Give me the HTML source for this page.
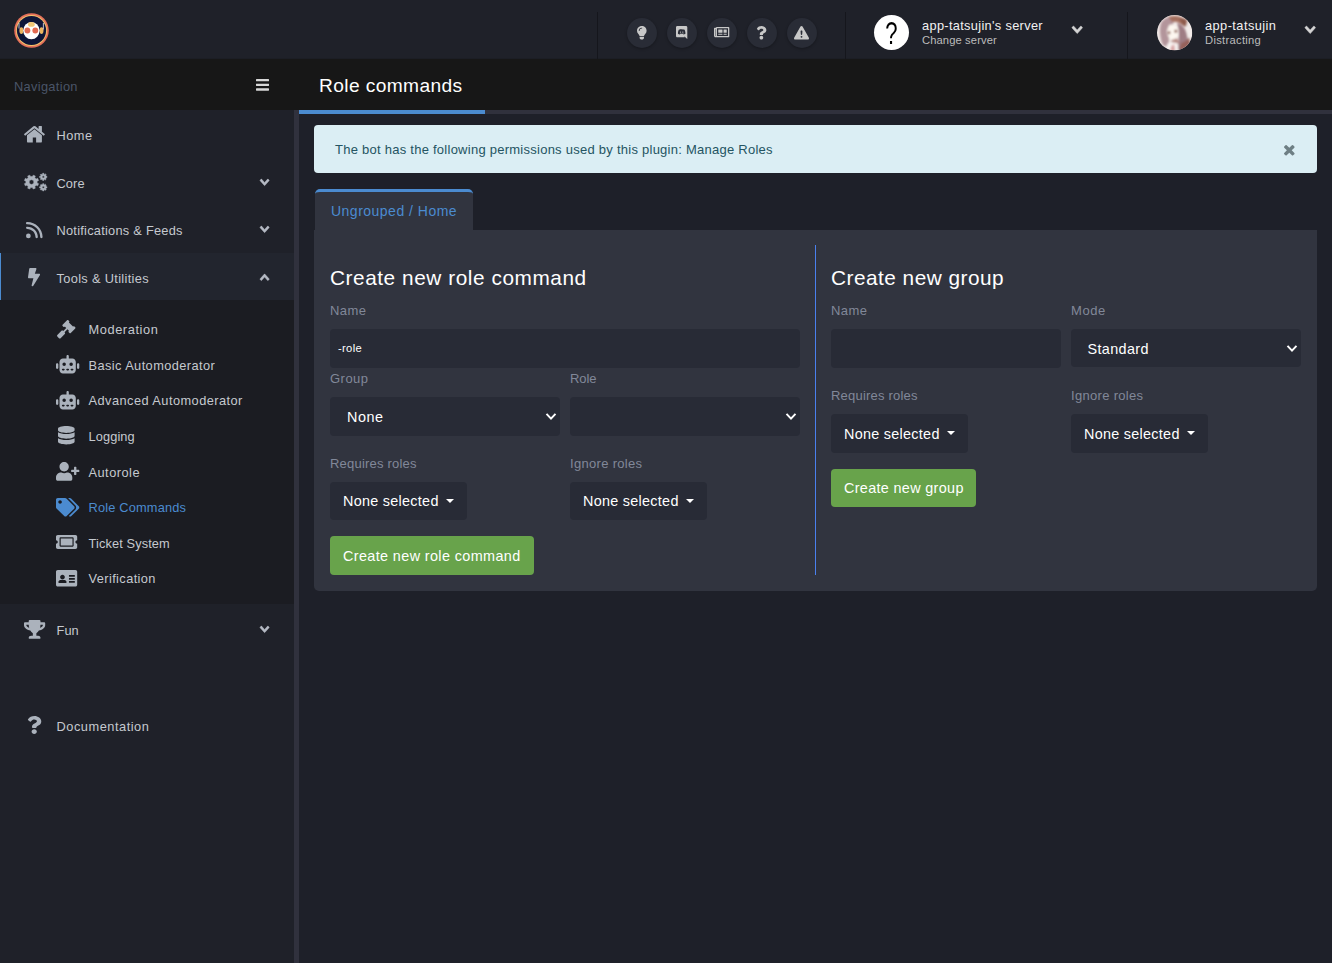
<!DOCTYPE html>
<html lang="en">
<head>
<meta charset="utf-8">
<title>Role commands</title>
<style>
html,body{margin:0;padding:0}
body{width:1332px;height:963px;overflow:hidden;background:#1e2029;position:relative;font-family:"Liberation Sans",sans-serif;color:#fff}
.a{position:absolute}
.t{position:absolute;white-space:nowrap;line-height:1;margin:0;padding:0;font-weight:400}
.ic{position:absolute;display:block;overflow:visible}
#hdr{left:0;top:0;width:1332px;height:58px;background:#1f2129;border-bottom:1px solid #1c1e25}
.sep{width:1px;top:12px;height:47px;background:#15161c}
.circ{width:30px;height:30px;top:17.500px;border-radius:50%;background:#292c36;box-shadow:0 1px 3px rgba(0,0,0,.3)}
#bar{left:0;top:59px;width:1332px;height:51px;background:#171717}
#side{left:0;top:110px;width:294px;height:853px;background:#1f2129}
#div{left:294px;top:110px;width:5px;height:853px;background:#30313d}
#strip{left:299px;top:110px;width:1033px;height:4px;background:#30313d}
#blue{left:299px;top:110px;width:186px;height:4px;background:#4b8bd0}
#act{left:0;top:253px;width:294px;height:47px;background:#22252e}
#actb{left:0;top:253px;width:1px;height:47px;background:#4b8bd0}
#sub{left:0;top:300px;width:294px;height:304px;background:#1b1c22}
.nav{color:#c5c9cf}
.lbl{color:#818899}
#alert{left:314px;top:125px;width:1003px;height:48px;background:#dbeef4;border-radius:4px}
#tab{left:315px;top:189px;width:158px;height:41px;background:#31343f;border-top:3px solid #4b8bd0;border-radius:5px 5px 0 0;box-sizing:border-box}
#card{left:314px;top:230px;width:1003px;height:361px;background:#31343f;border-radius:0 0 5px 5px}
#vline{left:815px;top:245px;width:1px;height:330px;background:#4a80ee}
.inp{background:#282b36;border-radius:4px}
.btn{background:#282b36;border-radius:4px}
.gbtn{background:#68a34b;border-radius:4px}
.caret{width:0;height:0;border-left:4px solid transparent;border-right:4px solid transparent;border-top:4.300px solid #fff}
</style>
</head>
<body>
<!-- top header -->
<div class="a" id="hdr"></div>
<svg class="ic" style="left:14px;top:13px;width:35px;height:35px" viewBox="0 0 35 35">
<circle cx="17.5" cy="17.5" r="17.300" fill="#e4705a"/>
<circle cx="17.5" cy="17.5" r="15.500" fill="#f3c46b"/>
<circle cx="17.5" cy="17.5" r="14.600" fill="#0e1638"/>
<ellipse cx="7.400" cy="17.600" rx="2" ry="3.400" fill="#e9b45f"/>
<ellipse cx="27.500" cy="17.600" rx="2" ry="3.400" fill="#e9b45f"/>
<rect x="4.600" y="10" width="0.800" height="5.500" fill="#e8e8ee"/>
<rect x="28.900" y="10" width="0.800" height="6.500" fill="#e8e8ee"/>
<ellipse cx="17.400" cy="17.600" rx="8.200" ry="8.700" fill="#ffffff"/>
<ellipse cx="17.400" cy="11.400" rx="3.400" ry="2.400" fill="#f1c777"/>
<circle cx="13.400" cy="17.500" r="2.900" fill="#e26a52"/>
<circle cx="21.300" cy="17.500" r="2.900" fill="#e26a52"/>
</svg>
<div class="a sep" style="left:597px"></div>
<div class="a circ" style="left:627px"></div>
<div class="a circ" style="left:667px"></div>
<div class="a circ" style="left:707px"></div>
<div class="a circ" style="left:747px"></div>
<div class="a circ" style="left:787px"></div>
<svg class="ic" style="left:636.7px;top:25.5px;width:9.6px;height:13.5px" viewBox="0 0 352 512" preserveAspectRatio="none" fill="#c8c8c8"><path d="M96.060 454.350c.010 6.290 1.870 12.450 5.360 17.690l17.090 25.690a31.990 31.990 0 0 0 26.640 14.280h61.710a31.990 31.990 0 0 0 26.640-14.280l17.090-25.690a31.989 31.989 0 0 0 5.360-17.690l.040-38.350H96.010l.050 38.350zM0 176c0 44.370 16.450 84.850 43.560 115.780 16.520 18.850 42.360 58.230 52.210 91.450.040.260.070.520.110.780h160.240c.040-.260.070-.510.110-.780 9.850-33.220 35.690-72.600 52.210-91.450C335.550 260.850 352 220.370 352 176 352 78.610 272.910-.300 175.450 0 73.440.310 0 82.970 0 176zm176-80c-44.110 0-80 35.890-80 80 0 8.840-7.160 16-16 16s-16-7.160-16-16c0-61.760 50.240-112 112-112 8.840 0 16 7.160 16 16s-7.160 16-16 16z"/></svg>
<svg class="ic" style="left:675.8px;top:25.5px;width:11.3px;height:12.9px" viewBox="0.0 0.0 448.0 512.0" preserveAspectRatio="none" fill="#c8c8c8"><path d="M297.216 243.2c0 15.616-11.52 28.416-26.112 28.416-14.336 0-26.112-12.8-26.112-28.416s11.52-28.416 26.112-28.416c14.592 0 26.112 12.8 26.112 28.416zm-119.552-28.416c-14.592 0-26.112 12.8-26.112 28.416s11.776 28.416 26.112 28.416c14.592 0 26.112-12.8 26.112-28.416.256-15.616-11.52-28.416-26.112-28.416zM448 52.736V512c-64.494-56.994-43.868-38.128-118.784-107.776l13.568 47.36H52.48C23.552 451.584 0 428.032 0 398.848V52.736C0 23.552 23.552 0 52.48 0h343.04C424.448 0 448 23.552 448 52.736zm-72.96 242.688c0-82.432-36.864-149.248-36.864-149.248-36.864-27.648-71.936-26.88-71.936-26.88l-3.584 4.096c43.52 13.312 63.744 32.512 63.744 32.512-60.811-33.329-132.244-33.335-191.232-7.424-9.472 4.352-15.104 7.424-15.104 7.424s21.248-20.224 67.328-33.536l-2.56-3.072s-35.072-.768-71.936 26.88c0 0-36.864 66.816-36.864 149.248 0 0 21.504 37.12 78.08 38.912 0 0 9.472-11.52 17.152-21.248-32.512-9.728-44.8-30.208-44.8-30.208 3.766 2.636 9.976 6.053 10.496 6.400 43.21 24.198 104.588 32.126 159.744 8.960 8.960-3.328 18.944-8.192 29.440-15.104 0 0-12.8 20.992-46.336 30.464 7.680 9.728 16.896 20.736 16.896 20.736 56.576-1.792 78.336-38.912 78.336-38.912z"/></svg>
<svg class="ic" style="left:713.9px;top:26.7px;width:15.3px;height:10.3px" viewBox="0 0 576 384" preserveAspectRatio="none" fill="#c8c8c8"><path fill-rule="evenodd" d="M552 0H112C92 0 74 13 68 32H24C11 32 0 43 0 56v272c0 31 25 56 56 56h496c13 0 24-11 24-24V24c0-13-11-24-24-24zM48 328V80h16v248c0 4-4 8-8 8s-8-4-8-8zm480 8H111c1-3 1-5 1-8V48h416v288zM172 216h136c7 0 12-5 12-12V108c0-7-5-12-12-12H172c-7 0-12 5-12 12v96c0 7 5 12 12 12zm200 0h96c7 0 12-5 12-12V108c0-7-5-12-12-12h-96c-7 0-12 5-12 12v96c0 7 5 12 12 12zM160 276v-8c0-7 5-12 12-12h136c7 0 12 5 12 12v8c0 7-5 12-12 12H172c-7 0-12-5-12-12zm200 0v-8c0-7 5-12 12-12h96c7 0 12 5 12 12v8c0 7-5 12-12 12h-96c-7 0-12-5-12-12z"/></svg>
<svg class="ic" style="left:757.1px;top:25.5px;width:9.4px;height:13.5px" viewBox="29 0 349 512" preserveAspectRatio="none" fill="#c8c8c8"><path d="M202.021 0C122.202 0 70.503 32.703 29.914 91.026c-7.363 10.580-5.093 25.086 5.178 32.874l43.138 32.709c10.373 7.865 25.132 6.026 33.253-4.148 25.049-31.381 43.630-49.449 82.757-49.449 30.764 0 68.816 19.799 68.816 49.631 0 22.552-18.617 34.134-48.993 51.164-35.423 19.860-82.299 44.576-82.299 106.405V320c0 13.255 10.745 24 24 24h72.471c13.255 0 24-10.745 24-24v-5.773c0-42.860 125.268-44.645 125.268-160.627C377.504 66.256 286.902 0 202.021 0zM192 373.459c-38.196 0-69.271 31.075-69.271 69.271 0 38.195 31.075 69.270 69.271 69.270s69.271-31.075 69.271-69.271-31.075-69.270-69.271-69.270z"/></svg>
<svg class="ic" style="left:794.1px;top:25.5px;width:15px;height:13.5px" viewBox="-0.0 0.0 512.0 480.0" preserveAspectRatio="none" fill="#c8c8c8"><path d="M256 0c14.7 0 28.2 8.1 35.2 21l216 400c6.7 12.4 6.4 27.4-.8 39.5S486.1 480 472 480H40c-14.1 0-27.2-7.4-34.4-19.5s-7.5-27.1-.8-39.5l216-400c7-12.9 20.5-21 35.2-21m0 352a32 32 0 1 0 0 64 32 32 0 1 0 0-64m0-192c-18.2 0-32.7 15.5-31.4 33.7l7.4 104c.9 12.5 11.4 22.3 23.9 22.3 12.6 0 23-9.7 23.9-22.3l7.4-104c1.3-18.2-13.1-33.7-31.4-33.7z"/></svg>
<div class="a sep" style="left:845px"></div>
<div class="a" style="left:874px;top:15px;width:35px;height:35px;border-radius:50%;background:#fff"></div>
<div class="t" style="left:874px;top:16.500px;width:35px;text-align:center;font-size:32px;color:#000;transform:scaleX(.69)">?</div>
<div class="t" style="left:922px;top:20px;font-size:12.8px;color:#f2f2f2;letter-spacing:0.324px">app-tatsujin's server</div>
<div class="t" style="left:922px;top:35px;font-size:11.2px;color:#bcbcbc;letter-spacing:0.115px">Change server</div>
<svg class="ic" style="left:1072px;top:26.1px;width:10.4px;height:7.5px" viewBox="90.0 -1003.0 1612.0 1035.0" preserveAspectRatio="none" fill="#d4d4d4" stroke="#d4d4d4" stroke-width="70" stroke-linejoin="round"><path transform="scale(1,-1)" d="M1683 728l-742 -741q-19 -19 -45 -19t-45 19l-742 741q-19 19 -19 45.5t19 45.5l166 165q19 19 45 19t45 -19l531 -531l531 531q19 19 45 19t45 -19l166 -165q19 -19 19 -45.5t-19 -45.5z"/></svg>
<div class="a sep" style="left:1127px"></div>
<svg class="ic" style="left:1157px;top:14.700px;width:35.300px;height:35.300px" viewBox="0 0 35 35">
<defs><clipPath id="avc"><circle cx="17.5" cy="17.5" r="17.5"/></clipPath><filter id="avb" x="-10%" y="-10%" width="120%" height="120%"><feGaussianBlur stdDeviation="0.800"/></filter></defs>
<g clip-path="url(#avc)">
<rect width="35" height="35" fill="#f1e9e7"/>
<g filter="url(#avb)">
<path d="M4 8C7 2 14 1 18 2l-2 7c-3 5-5 13-4 23l-6-2C3 24 2 14 4 8z" fill="#b3959b"/>
<path d="M11 2c6-2 15-1 19 5l-2 5c-4-4-9-6-13-5z" fill="#a5705f"/>
<path d="M22 3l7 1 1 7-5-1z" fill="#8e5a4b"/>
<path d="M20 8c5 1 9 6 10 14 1 6-1 10-4 13h-7c3-7 4-17 1-27z" fill="#9f7d84"/>
<path d="M12 10c4-2 8 1 9 6 0 5-3 9-6 9-3-1-5-5-5-10z" fill="#fdf7f0"/>
<ellipse cx="12" cy="17.500" rx="1.300" ry="1.600" fill="#8a5648"/>
<ellipse cx="18.700" cy="16" rx="1.400" ry="1.700" fill="#8a5648"/>
<path d="M14 25l6-2 2 5-7 1z" fill="#b78a84"/>
<path d="M10 29c3-3 9-2 11 0v7H10z" fill="#f7f2f0"/>
<path d="M14 31l3-2 1 7h-5z" fill="#d9a5a5"/>
<path d="M24 28c3-1 6-3 8-6l1 8-7 6h-4z" fill="#96625c"/>
<path d="M29 8c3 2 5 8 5 14l-3-1c0-5-1-9-2-13z" fill="#f4eeec"/>
</g>
</g>
</svg>
<div class="t" style="left:1205px;top:20px;font-size:12.8px;color:#f2f2f2;letter-spacing:0.435px">app-tatsujin</div>
<div class="t" style="left:1205px;top:35px;font-size:11.2px;color:#bcbcbc;letter-spacing:0.3px">Distracting</div>
<svg class="ic" style="left:1304.8px;top:26.1px;width:10.4px;height:7.5px" viewBox="90.0 -1003.0 1612.0 1035.0" preserveAspectRatio="none" fill="#d4d4d4" stroke="#d4d4d4" stroke-width="70" stroke-linejoin="round"><path transform="scale(1,-1)" d="M1683 728l-742 -741q-19 -19 -45 -19t-45 19l-742 741q-19 19 -19 45.5t19 45.5l166 165q19 19 45 19t45 -19l531 -531l531 531q19 19 45 19t45 -19l166 -165q19 -19 19 -45.5t-19 -45.5z"/></svg>
<!-- title bar -->
<div class="a" id="bar"></div>
<div class="t" style="left:14px;top:81px;font-size:12.8px;color:#4a5568;letter-spacing:0.331px">Navigation</div>
<svg class="ic" style="left:256px;top:78.5px;width:13px;height:11.7px" viewBox="0.0 -1280.0 1536.0 1280.0" preserveAspectRatio="none" fill="#d8d8d8"><path transform="scale(1,-1)" d="M1536 192v-128q0 -26 -19 -45t-45 -19h-1408q-26 0 -45 19t-19 45v128q0 26 19 45t45 19h1408q26 0 45 -19t19 -45zM1536 704v-128q0 -26 -19 -45t-45 -19h-1408q-26 0 -45 19t-19 45v128q0 26 19 45t45 19h1408q26 0 45 -19t19 -45zM1536 1216v-128q0 -26 -19 -45
t-45 -19h-1408q-26 0 -45 19t-19 45v128q0 26 19 45t45 19h1408q26 0 45 -19t19 -45z"/></svg>
<h2 class="t" style="left:319px;top:76px;font-size:19.2px;color:#fff;letter-spacing:0.379px">Role commands</h2>
<!-- sidebar -->
<div class="a" id="side"></div>
<div class="a" id="div"></div>
<div class="a" id="strip"></div>
<div class="a" id="blue"></div>
<div class="a" id="act"></div>
<div class="a" id="actb"></div>
<div class="a" id="sub"></div>
<svg class="ic" style="left:23.9px;top:125.8px;width:20.9px;height:16.4px" viewBox="25.9 -1283.0 1612.2 1283.0" preserveAspectRatio="none" fill="#abb2bc"><path transform="scale(1,-1)" d="M1408 544v-480q0 -26 -19 -45t-45 -19h-384v384h-256v-384h-384q-26 0 -45 19t-19 45v480q0 1 0.5 3t0.5 3l575 474l575 -474q1 -2 1 -6zM1631 613l-62 -74q-8 -9 -21 -11h-3q-13 0 -21 7l-692 577l-692 -577q-12 -8 -24 -7q-13 2 -21 11l-62 74q-8 10 -7 23.5t11 21.5
l719 599q32 26 76 26t76 -26l244 -204v195q0 14 9 23t23 9h192q14 0 23 -9t9 -23v-408l219 -182q10 -8 11 -21.5t-7 -23.5z"/></svg>
<div class="t nav" style="left:56.5px;top:130px;font-size:12.8px;letter-spacing:0.508px">Home</div>
<svg class="ic" style="left:23.9px;top:173px;width:23.2px;height:18.2px" viewBox="0 0 640 512" preserveAspectRatio="none" fill="#abb2bc" stroke="#abb2bc"><path fill-rule="evenodd" stroke-linejoin="round" stroke-width="14" d="M361 283L402 301L377 362L335 346L297 384L313 426L252 451L234 410L180 410L162 451L101 426L117 384L79 346L37 362L12 301L53 283L53 229L12 211L37 150L79 166L117 128L101 86L162 61L180 102L234 102L252 61L313 86L297 128L335 166L377 150L402 211L361 229ZM273 256A66 66 0 1 0 141 256A66 66 0 1 0 273 256ZM610 93L634 93L634 127L610 127L600 153L616 170L592 194L575 178L549 188L549 212L515 212L515 188L489 178L472 194L448 170L464 153L454 127L430 127L430 93L454 93L464 67L448 50L472 26L489 42L515 32L515 8L549 8L549 32L575 42L592 26L616 50L600 67ZM562 110A30 30 0 1 0 502 110A30 30 0 1 0 562 110ZM610 385L634 385L634 419L610 419L600 445L616 462L592 486L575 470L549 480L549 504L515 504L515 480L489 470L472 486L448 462L464 445L454 419L430 419L430 385L454 385L464 359L448 342L472 318L489 334L515 324L515 300L549 300L549 324L575 334L592 318L616 342L600 359ZM562 402A30 30 0 1 0 502 402A30 30 0 1 0 562 402Z"/></svg>
<div class="t nav" style="left:56.5px;top:178px;font-size:12.8px;letter-spacing:0.109px">Core</div>
<svg class="ic" style="left:260.4px;top:178.8px;width:9.2px;height:6.6px" viewBox="90.0 -1003.0 1612.0 1035.0" preserveAspectRatio="none" fill="#b4b9c3" stroke="#b4b9c3" stroke-width="70" stroke-linejoin="round"><path transform="scale(1,-1)" d="M1683 728l-742 -741q-19 -19 -45 -19t-45 19l-742 741q-19 19 -19 45.5t19 45.5l166 165q19 19 45 19t45 -19l531 -531l531 531q19 19 45 19t45 -19l166 -165q19 -19 19 -45.5t-19 -45.5z"/></svg>
<svg class="ic" style="left:25.8px;top:221.9px;width:16.6px;height:16.2px" viewBox="0.0 32.0 448.0 448.0" preserveAspectRatio="none" fill="#abb2bc"><path d="M0 64c0-17.7 14.3-32 32-32 229.8 0 416 186.2 416 416 0 17.7-14.3 32-32 32s-32-14.3-32-32C384 253.6 226.4 96 32 96 14.3 96 0 81.7 0 64m0 352a64 64 0 1 1 128 0 64 64 0 1 1-128 0m32-256c159.1 0 288 128.9 288 288 0 17.7-14.3 32-32 32s-32-14.3-32-32c0-123.7-100.3-224-224-224-17.7 0-32-14.3-32-32s14.3-32 32-32"/></svg>
<div class="t nav" style="left:56.5px;top:225px;font-size:12.8px;letter-spacing:0.252px">Notifications &amp; Feeds</div>
<svg class="ic" style="left:260.4px;top:226.4px;width:9.2px;height:6.6px" viewBox="90.0 -1003.0 1612.0 1035.0" preserveAspectRatio="none" fill="#b4b9c3" stroke="#b4b9c3" stroke-width="70" stroke-linejoin="round"><path transform="scale(1,-1)" d="M1683 728l-742 -741q-19 -19 -45 -19t-45 19l-742 741q-19 19 -19 45.5t19 45.5l166 165q19 19 45 19t45 -19l531 -531l531 531q19 19 45 19t45 -19l166 -165q19 -19 19 -45.5t-19 -45.5z"/></svg>
<svg class="ic" style="left:28px;top:268px;width:12.1px;height:18.2px" viewBox="-0.0 0.0 320.0 512.0" preserveAspectRatio="none" fill="#abb2bc"><path d="M296 160H180.6l42.6-129.8C227.2 15 215.7 0 200 0H56C44 0 33.8 8.9 32.2 20.8l-32 240C-1.7 275.2 9.5 288 24 288h118.7L96.6 482.5c-3.6 15.2 8 29.5 23.3 29.5 8.4 0 16.4-4.4 20.8-12l176-304c9.3-15.9-2.2-36-20.7-36z"/></svg>
<div class="t nav" style="left:56.5px;top:273px;font-size:12.8px;letter-spacing:0.332px">Tools &amp; Utilities</div>
<svg class="ic" style="left:260.4px;top:273.9px;width:9.2px;height:6.6px" viewBox="90.0 -1056.0 1612.0 1035.0" preserveAspectRatio="none" fill="#b4b9c3" stroke="#b4b9c3" stroke-width="70" stroke-linejoin="round"><path transform="scale(1,-1)" d="M1683 205l-166 -165q-19 -19 -45 -19t-45 19l-531 531l-531 -531q-19 -19 -45 -19t-45 19l-166 165q-19 19 -19 45.5t19 45.5l742 741q19 19 45 19t45 -19l742 -741q19 -19 19 -45.5t-19 -45.5z"/></svg>
<svg class="ic" style="left:56.9px;top:319.7px;width:18.5px;height:18.6px" viewBox="0 0 512 512" preserveAspectRatio="none" fill="#abb2bc"><path d="M504.971 199.362l-22.627-22.627c-9.373-9.373-24.569-9.373-33.941 0l-5.657 5.657L329.608 69.255l5.657-5.657c9.373-9.373 9.373-24.569 0-33.941L312.638 7.029c-9.373-9.373-24.569-9.373-33.941 0L154.246 131.480c-9.373 9.373-9.373 24.569 0 33.941l22.627 22.627c9.373 9.373 24.569 9.373 33.941 0l5.657-5.657 39.598 39.598-81.040 81.040-5.657-5.657c-12.497-12.497-32.758-12.497-45.255 0L9.373 412.118c-12.497 12.497-12.497 32.758 0 45.255l45.255 45.255c12.497 12.497 32.758 12.497 45.255 0l114.745-114.745c12.497-12.497 12.497-32.758 0-45.255l-5.657-5.657 81.040-81.040 39.598 39.598-5.657 5.657c-9.373 9.373-9.373 24.569 0 33.941l22.627 22.627c9.373 9.373 24.569 9.373 33.941 0l124.451-124.451c9.373-9.372 9.373-24.568 0-33.941z"/></svg>
<div class="t nav" style="left:88.5px;top:324px;font-size:12.8px;letter-spacing:0.588px">Moderation</div>
<svg class="ic" style="left:55.8px;top:354.9px;width:23.3px;height:18.6px" viewBox="0.0 -32.0 640.0 512.0" preserveAspectRatio="none" fill="#abb2bc"><path d="M352 0c0-17.7-14.3-32-32-32s-32 14.3-32 32v64h-96c-53 0-96 43-96 96v224c0 53 43 96 96 96h256c53 0 96-43 96-96V160c0-53-43-96-96-96h-96zM160 368c0-13.3 10.7-24 24-24h32c13.3 0 24 10.7 24 24s-10.7 24-24 24h-32c-13.3 0-24-10.7-24-24m120 0c0-13.3 10.7-24 24-24h32c13.3 0 24 10.7 24 24s-10.7 24-24 24h-32c-13.3 0-24-10.7-24-24m120 0c0-13.3 10.7-24 24-24h32c13.3 0 24 10.7 24 24s-10.7 24-24 24h-32c-13.3 0-24-10.7-24-24M224 176a48 48 0 1 1 0 96 48 48 0 1 1 0-96m144 48a48 48 0 1 1 96 0 48 48 0 1 1-96 0m-304 0c0-17.7-14.3-32-32-32S0 206.3 0 224v96c0 17.7 14.3 32 32 32s32-14.3 32-32zm544-32c-17.7 0-32 14.3-32 32v96c0 17.7 14.3 32 32 32s32-14.3 32-32v-96c0-17.7-14.3-32-32-32"/></svg>
<div class="t nav" style="left:88.5px;top:360px;font-size:12.8px;letter-spacing:0.419px">Basic Automoderator</div>
<svg class="ic" style="left:55.8px;top:390.5px;width:23.3px;height:18.6px" viewBox="0.0 -32.0 640.0 512.0" preserveAspectRatio="none" fill="#abb2bc"><path d="M352 0c0-17.7-14.3-32-32-32s-32 14.3-32 32v64h-96c-53 0-96 43-96 96v224c0 53 43 96 96 96h256c53 0 96-43 96-96V160c0-53-43-96-96-96h-96zM160 368c0-13.3 10.7-24 24-24h32c13.3 0 24 10.7 24 24s-10.7 24-24 24h-32c-13.3 0-24-10.7-24-24m120 0c0-13.3 10.7-24 24-24h32c13.3 0 24 10.7 24 24s-10.7 24-24 24h-32c-13.3 0-24-10.7-24-24m120 0c0-13.3 10.7-24 24-24h32c13.3 0 24 10.7 24 24s-10.7 24-24 24h-32c-13.3 0-24-10.7-24-24M224 176a48 48 0 1 1 0 96 48 48 0 1 1 0-96m144 48a48 48 0 1 1 96 0 48 48 0 1 1-96 0m-304 0c0-17.7-14.3-32-32-32S0 206.3 0 224v96c0 17.7 14.3 32 32 32s32-14.3 32-32zm544-32c-17.7 0-32 14.3-32 32v96c0 17.7 14.3 32 32 32s32-14.3 32-32v-96c0-17.7-14.3-32-32-32"/></svg>
<div class="t nav" style="left:88.5px;top:395px;font-size:12.8px;letter-spacing:0.451px">Advanced Automoderator</div>
<svg class="ic" style="left:57.7px;top:425.6px;width:16.6px;height:18.5px" viewBox="0 0 448 512" preserveAspectRatio="none" fill="#abb2bc"><path d="M448 73.143v45.714C448 159.143 347.667 192 224 192S0 159.143 0 118.857V73.143C0 32.857 100.333 0 224 0s224 32.857 224 73.143zM448 176v102.857C448 319.143 347.667 352 224 352S0 319.143 0 278.857V176c48.125 33.143 136.208 48.572 224 48.572S399.874 209.143 448 176zm0 160v102.857C448 479.143 347.667 512 224 512S0 479.143 0 438.857V336c48.125 33.143 136.208 48.572 224 48.572S399.874 369.143 448 336z"/></svg>
<div class="t nav" style="left:88.5px;top:431px;font-size:12.8px;letter-spacing:0.109px">Logging</div>
<svg class="ic" style="left:55.8px;top:461.6px;width:23.3px;height:18.8px" viewBox="0 0 640 512" preserveAspectRatio="none" fill="#abb2bc"><path d="M624 208h-64v-64c0-8.800-7.200-16-16-16h-32c-8.800 0-16 7.200-16 16v64h-64c-8.800 0-16 7.200-16 16v32c0 8.800 7.200 16 16 16h64v64c0 8.800 7.200 16 16 16h32c8.800 0 16-7.200 16-16v-64h64c8.800 0 16-7.200 16-16v-32c0-8.800-7.200-16-16-16zm-400 48c70.700 0 128-57.300 128-128S294.700 0 224 0 96 57.300 96 128s57.300 128 128 128zm89.600 32h-16.700c-22.200 10.200-46.900 16-72.900 16s-50.600-5.800-72.900-16h-16.700C60.200 288 0 348.200 0 422.400V464c0 26.500 21.500 48 48 48h352c26.500 0 48-21.500 48-48v-41.600c0-74.200-60.200-134.400-134.400-134.400z"/></svg>
<div class="t nav" style="left:88.5px;top:467px;font-size:12.8px;letter-spacing:0.484px">Autorole</div>
<svg class="ic" style="left:55.8px;top:497.9px;width:23.3px;height:18.6px" viewBox="0 0 640 512" preserveAspectRatio="none" fill="#4b8bd0"><path d="M497.941 225.941L286.059 14.059A48 48 0 0 0 252.118 0H48C21.490 0 0 21.490 0 48v204.118a48 48 0 0 0 14.059 33.941l211.882 211.882c18.744 18.745 49.136 18.746 67.882 0l204.118-204.118c18.745-18.745 18.745-49.137 0-67.882zM112 160c-26.510 0-48-21.490-48-48s21.490-48 48-48 48 21.490 48 48-21.490 48-48 48zm513.941 133.823L421.823 497.941c-18.745 18.745-49.137 18.745-67.882 0l-.360-.360L527.640 323.522c16.999-16.999 26.360-39.600 26.360-63.640s-9.362-46.641-26.360-63.640L331.397 0h48.721a48 48 0 0 1 33.941 14.059l211.882 211.882c18.745 18.745 18.745 49.137 0 67.882z"/></svg>
<div class="t nav" style="left:88.5px;top:502px;font-size:12.8px;color:#4b8bd0;letter-spacing:0.183px">Role Commands</div>
<svg class="ic" style="left:55.9px;top:535px;width:21.2px;height:14.1px" viewBox="0.0 64.0 576.0 384.0" preserveAspectRatio="none" fill="#abb2bc"><path d="M128 160h320v192H128V160zm400 96c0 26.51 21.49 48 48 48v96c0 26.51-21.49 48-48 48H48c-26.51 0-48-21.49-48-48v-96c26.51 0 48-21.49 48-48s-21.49-48-48-48v-96c0-26.51 21.49-48 48-48h480c26.51 0 48 21.49 48 48v96c-26.51 0-48 21.49-48 48zm-48-104c0-13.255-10.745-24-24-24H120c-13.255 0-24 10.745-24 24v208c0 13.255 10.745 24 24 24h336c13.255 0 24-10.745 24-24V152z"/></svg>
<div class="t nav" style="left:88.5px;top:538px;font-size:12.8px;letter-spacing:0.112px">Ticket System</div>
<svg class="ic" style="left:55.9px;top:569.8px;width:21.2px;height:16.5px" viewBox="0 0 576 448" preserveAspectRatio="none" fill="#abb2bc"><path fill-rule="evenodd" d="M48 0h480c26.500 0 48 21.500 48 48v352c0 26.500-21.500 48-48 48H48c-26.500 0-48-21.500-48-48V48C0 21.500 21.500 0 48 0zm128 128c-35.300 0-64 28.700-64 64s28.700 64 64 64 64-28.700 64-64-28.700-64-64-64zm93.300 224c10.300 0 18.700-8.400 18.700-18.700 0-44.200-35.800-61.300-80-61.300h-64c-44.200 0-80 17.100-80 61.300 0 10.300 8.400 18.700 18.700 18.700h186.600zM360 136c-4.400 0-8 3.600-8 8v32c0 4.400 3.600 8 8 8h144c4.400 0 8-3.600 8-8v-32c0-4.400-3.600-8-8-8H360zm0 80c-4.400 0-8 3.600-8 8v32c0 4.400 3.600 8 8 8h144c4.400 0 8-3.600 8-8v-32c0-4.400-3.600-8-8-8H360zm0 80c-4.400 0-8 3.600-8 8v32c0 4.400 3.600 8 8 8h144c4.400 0 8-3.600 8-8v-32c0-4.400-3.600-8-8-8H360z"/></svg>
<div class="t nav" style="left:88.5px;top:573px;font-size:12.8px;letter-spacing:0.398px">Verification</div>
<svg class="ic" style="left:23.8px;top:619.9px;width:21.2px;height:18.7px" viewBox="0 0 576 512" preserveAspectRatio="none" fill="#abb2bc"><path d="M552 64H448V24c0-13.300-10.700-24-24-24H152c-13.300 0-24 10.700-24 24v40H24C10.700 64 0 74.700 0 88v56c0 35.700 22.500 72.400 61.900 100.700 31.500 22.700 69.800 37.100 110 41.700C203.300 338.500 240 360 240 360v72h-48c-35.300 0-64 20.700-64 56v12c0 6.600 5.400 12 12 12h296c6.600 0 12-5.400 12-12v-12c0-35.300-28.700-56-64-56h-48v-72s36.700-21.500 68.100-73.600c40.300-4.600 78.600-19 110-41.700 39.300-28.300 61.900-65 61.900-100.700V88c0-13.300-10.700-24-24-24zM99.300 192.800C74.900 175.200 64 155.600 64 144v-16h64.200c1 32.600 5.800 61.200 12.800 86.200-15.100-5.200-29.200-12.400-41.700-21.400zM512 144c0 16.100-17.700 36.100-35.300 48.800-12.500 9-26.700 16.200-41.800 21.400 7-25 11.800-53.600 12.800-86.200H512v16z"/></svg>
<div class="t nav" style="left:56.5px;top:625px;font-size:12.8px;letter-spacing:0.083px">Fun</div>
<svg class="ic" style="left:260.4px;top:626px;width:9.2px;height:6.6px" viewBox="90.0 -1003.0 1612.0 1035.0" preserveAspectRatio="none" fill="#b4b9c3" stroke="#b4b9c3" stroke-width="70" stroke-linejoin="round"><path transform="scale(1,-1)" d="M1683 728l-742 -741q-19 -19 -45 -19t-45 19l-742 741q-19 19 -19 45.5t19 45.5l166 165q19 19 45 19t45 -19l531 -531l531 531q19 19 45 19t45 -19l166 -165q19 -19 19 -45.5t-19 -45.5z"/></svg>
<svg class="ic" style="left:27.9px;top:716.2px;width:13.3px;height:18px" viewBox="29 0 349 512" preserveAspectRatio="none" fill="#abb2bc"><path d="M202.021 0C122.202 0 70.503 32.703 29.914 91.026c-7.363 10.580-5.093 25.086 5.178 32.874l43.138 32.709c10.373 7.865 25.132 6.026 33.253-4.148 25.049-31.381 43.630-49.449 82.757-49.449 30.764 0 68.816 19.799 68.816 49.631 0 22.552-18.617 34.134-48.993 51.164-35.423 19.860-82.299 44.576-82.299 106.405V320c0 13.255 10.745 24 24 24h72.471c13.255 0 24-10.745 24-24v-5.773c0-42.860 125.268-44.645 125.268-160.627C377.504 66.256 286.902 0 202.021 0zM192 373.459c-38.196 0-69.271 31.075-69.271 69.271 0 38.195 31.075 69.270 69.271 69.270s69.271-31.075 69.271-69.271-31.075-69.270-69.271-69.270z"/></svg>
<div class="t nav" style="left:56.5px;top:721px;font-size:12.8px;letter-spacing:0.522px">Documentation</div>
<!-- content -->
<div class="a" id="alert"></div>
<div class="t" style="left:335px;top:143px;font-size:13px;color:#245462;letter-spacing:0.253px">The bot has the following permissions used by this plugin: Manage Roles</div>
<svg class="ic" style="left:1283.8px;top:145.2px;width:10.6px;height:10.6px" viewBox="110.0 -1170.0 1188.0 1188.0" preserveAspectRatio="none" fill="#6e7f84"><path transform="scale(1,-1)" d="M1298 214q0 -40 -28 -68l-136 -136q-28 -28 -68 -28t-68 28l-294 294l-294 -294q-28 -28 -68 -28t-68 28l-136 136q-28 28 -28 68t28 68l294 294l-294 294q-28 28 -28 68t28 68l136 136q28 28 68 28t68 -28l294 -294l294 294q28 28 68 28t68 -28l136 -136q28 -28 28 -68
t-28 -68l-294 -294l294 -294q28 -28 28 -68z"/></svg>
<div class="a" id="tab"></div>
<div class="t" style="left:331px;top:204px;font-size:14px;color:#4b8bd0;letter-spacing:0.487px">Ungrouped / Home</div>
<div class="a" id="card"></div>
<div class="a" id="vline"></div>
<h3 class="t" style="left:330px;top:268px;font-size:20.8px;color:#fff;letter-spacing:0.554px">Create new role command</h3>
<div class="t lbl" style="left:330px;top:304px;font-size:13px;letter-spacing:0.418px">Name</div>
<div class="a inp" style="left:330px;top:329px;width:470px;height:39px"></div>
<div class="t" style="left:338px;top:343px;font-size:11.2px;color:#fff;letter-spacing:0.325px">-role</div>
<div class="t lbl" style="left:330px;top:372px;font-size:13px;letter-spacing:0.475px">Group</div>
<div class="t lbl" style="left:570px;top:372px;font-size:13px;letter-spacing:-0.078px">Role</div>
<div class="a inp" style="left:330px;top:397px;width:230px;height:39px"></div>
<div class="t" style="left:347px;top:410px;font-size:14.4px;color:#fff;letter-spacing:0.5px">None</div>
<svg class="ic" style="left:546px;top:413px;width:10px;height:7.5px" viewBox="0 0 10 7.5" preserveAspectRatio="none"><path d="M1.2 1.6L5 5.6l3.800-4" fill="none" stroke="#fff" stroke-width="2" stroke-linecap="square"/></svg>
<div class="a inp" style="left:570px;top:397px;width:230px;height:39px"></div>
<svg class="ic" style="left:786px;top:413px;width:10px;height:7.5px" viewBox="0 0 10 7.5" preserveAspectRatio="none"><path d="M1.2 1.6L5 5.6l3.800-4" fill="none" stroke="#fff" stroke-width="2" stroke-linecap="square"/></svg>
<div class="t lbl" style="left:330px;top:457px;font-size:13px;letter-spacing:0.201px">Requires roles</div>
<div class="t lbl" style="left:570px;top:457px;font-size:13px;letter-spacing:0.311px">Ignore roles</div>
<div class="a btn" style="left:330px;top:482px;width:137px;height:38px"></div>
<div class="t" style="left:343px;top:494px;font-size:14.4px;color:#fff;letter-spacing:0.284px">None selected</div>
<div class="a caret" style="left:446px;top:498.500px"></div>
<div class="a btn" style="left:570px;top:482px;width:137px;height:38px"></div>
<div class="t" style="left:583px;top:494px;font-size:14.4px;color:#fff;letter-spacing:0.284px">None selected</div>
<div class="a caret" style="left:686px;top:498.500px"></div>
<div class="a gbtn" style="left:330px;top:536px;width:204px;height:39px"></div>
<div class="t" style="left:343px;top:549px;font-size:14.4px;color:#fff;letter-spacing:0.382px">Create new role command</div>
<h3 class="t" style="left:831px;top:268px;font-size:20.8px;color:#fff;letter-spacing:0.483px">Create new group</h3>
<div class="t lbl" style="left:831px;top:304px;font-size:13px;letter-spacing:0.418px">Name</div>
<div class="t lbl" style="left:1071px;top:304px;font-size:13px;letter-spacing:0.562px">Mode</div>
<div class="a inp" style="left:831px;top:329px;width:230px;height:39px"></div>
<div class="a inp" style="left:1071px;top:329px;width:230px;height:38px"></div>
<div class="t" style="left:1087.5px;top:342px;font-size:14.4px;color:#fff;letter-spacing:0.367px">Standard</div>
<svg class="ic" style="left:1287px;top:344.5px;width:10px;height:7.5px" viewBox="0 0 10 7.5" preserveAspectRatio="none"><path d="M1.2 1.6L5 5.6l3.800-4" fill="none" stroke="#fff" stroke-width="2" stroke-linecap="square"/></svg>
<div class="t lbl" style="left:831px;top:389px;font-size:13px;letter-spacing:0.201px">Requires roles</div>
<div class="t lbl" style="left:1071px;top:389px;font-size:13px;letter-spacing:0.311px">Ignore roles</div>
<div class="a btn" style="left:831px;top:414px;width:137px;height:39px"></div>
<div class="t" style="left:844px;top:427px;font-size:14.4px;color:#fff;letter-spacing:0.284px">None selected</div>
<div class="a caret" style="left:947px;top:431.300px"></div>
<div class="a btn" style="left:1071px;top:414px;width:137px;height:39px"></div>
<div class="t" style="left:1084px;top:427px;font-size:14.4px;color:#fff;letter-spacing:0.284px">None selected</div>
<div class="a caret" style="left:1187px;top:431.300px"></div>
<div class="a gbtn" style="left:831px;top:469px;width:145px;height:38px"></div>
<div class="t" style="left:844px;top:481px;font-size:14.4px;color:#fff;letter-spacing:0.334px">Create new group</div>
</body>
</html>
